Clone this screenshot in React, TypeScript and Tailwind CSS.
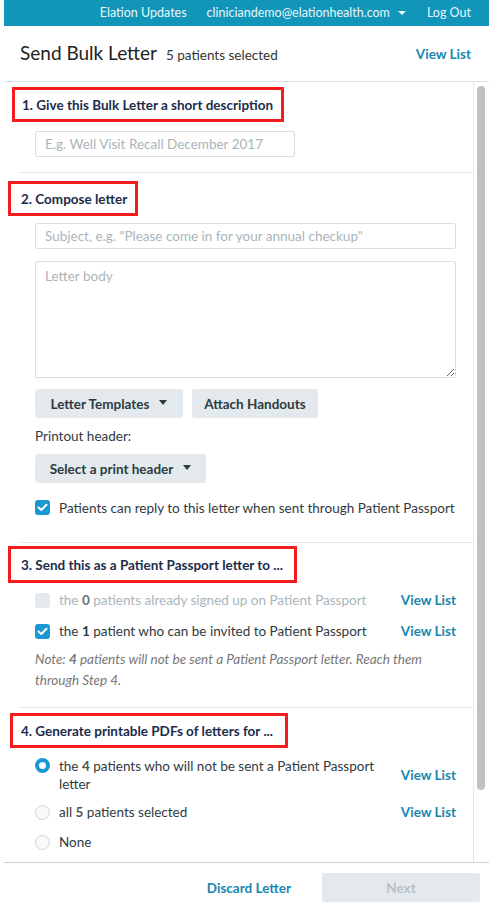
import React from "react";

const Check = () => (
  <svg width="11" height="9" viewBox="0 0 11 9" fill="none">
    <path d="M1.5 4.5 L4.3 7 L9.5 1.8" stroke="white" strokeWidth="2" strokeLinecap="round" strokeLinejoin="round" />
  </svg>
);

const Caret = () => (
  <span className="inline-block w-0 h-0 border-l-[4px] border-r-[4px] border-t-[5px] border-l-transparent border-r-transparent border-t-[#2c3b42] ml-[10px] translate-y-[-1px]" />
);

function Heading({ text, ml, w, h, pl, mt }: { text: string; ml: string; w: string; h: string; pl: string; mt: string }) {
  return (
    <div className={`${ml} ${w} ${h} ${pl} ${mt} border-[3px] border-[#f41c1c] flex items-center text-[13.5px] font-bold text-[#1b2c4b] whitespace-nowrap`}>
      {text}
    </div>
  );
}

export default function App() {
  return (
    <div className="w-[489px] h-[912px] bg-white pl-[4px] flex flex-col font-['Lato','Liberation_Sans',sans-serif] text-[13.5px] leading-[16px] text-[#2f3a3f] overflow-hidden">
      {/* top bar */}
      <div className="h-[26px] bg-[#1196b9] flex items-center justify-end pr-[18px] text-[12.5px] text-[#e8f5f9] shrink-0">
        <span>Elation Updates</span>
        <span className="ml-[20px] flex items-center">
          cliniciandemo@elationhealth.com
          <span className="inline-block w-0 h-0 border-l-[4px] border-r-[4px] border-t-[4px] border-l-transparent border-r-transparent border-t-[#e8f5f9] ml-[8px]" />
        </span>
        <span className="ml-[21px]">Log Out</span>
      </div>
      {/* header */}
      <div className="h-[56px] flex items-center justify-between pl-[16px] pr-[18px] border-b border-[#dce3e7] shrink-0">
        <div className="flex items-baseline">
          <span className="text-[19px] text-[#222]">Send Bulk Letter</span>
          <span className="ml-[9px] text-[13.5px] text-[#333]">5 patients selected</span>
        </div>
        <span className="text-[13.5px] font-bold text-[#1986b0]">View List</span>
      </div>
      {/* body */}
      <div className="flex-1 flex min-h-0">
        <div className="w-[470px] border-r border-[#e6e8ea] flex flex-col shrink-0">
          {/* Section 1 */}
          <Heading text="1. Give this Bulk Letter a short description" ml="ml-[8px]" w="w-[272px]" h="h-[35px]" pl="pl-[7px]" mt="mt-[5px]" />
          <input
            placeholder="E.g. Well Visit Recall December 2017"
            className="ml-[31px] mt-[9px] w-[260px] h-[26px] border border-[#d8dfe3] rounded-[2px] px-[9px] text-[13.5px] placeholder:text-[#aab5bb] outline-none"
          />
          <div className="ml-[16px] mt-[15px] border-t border-[#e3e7ea]" />
          {/* Section 2 */}
          <Heading text="2. Compose letter" ml="ml-[4px]" w="w-[130px]" h="h-[35px]" pl="pl-[10px]" mt="mt-[8px]" />
          <input
            placeholder={'Subject, e.g. "Please come in for your annual checkup"'}
            className="ml-[31px] mt-[7px] w-[421px] h-[26px] border border-[#d8dfe3] rounded-[2px] px-[9px] text-[13.5px] placeholder:text-[#aab5bb] outline-none"
          />
          <textarea
            placeholder="Letter body"
            className="ml-[31px] mt-[12px] w-[421px] h-[117px] border border-[#d8dfe3] rounded-[2px] px-[9px] py-[6px] text-[13.5px] placeholder:text-[#aab5bb] outline-none resize-y"
          />
          <div className="ml-[31px] mt-[11px] flex gap-[9px]">
            <div className="w-[148px] h-[29px] rounded-[3px] bg-[#e3e9ec] flex items-center justify-center font-bold text-[#2c3b42]">
              Letter Templates
              <Caret />
            </div>
            <div className="w-[126px] h-[29px] rounded-[3px] bg-[#e3e9ec] flex items-center justify-center font-bold text-[#2c3b42]">
              Attach Handouts
            </div>
          </div>
          <div className="ml-[31px] mt-[11px] h-[15px] leading-[15px] text-[#2f3a3f]">Printout header:</div>
          <div className="ml-[31px] mt-[10px] w-[171px] h-[29px] rounded-[3px] bg-[#e3e9ec] flex items-center justify-center font-bold text-[#2c3b42]">
            Select a print header
            <Caret />
          </div>
          <div className="ml-[31px] mt-[17px] flex items-center h-[15px]">
            <span className="w-[15px] h-[15px] rounded-[3px] bg-[#1a98d3] flex items-center justify-center shrink-0">
              <Check />
            </span>
            <span className="ml-[9px] text-[#2f3a3f] whitespace-nowrap">Patients can reply to this letter when sent through Patient Passport</span>
          </div>
          <div className="ml-[16px] mt-[27px] border-t border-[#e3e7ea]" />
          {/* Section 3 */}
          <Heading text="3. Send this as a Patient Passport letter to ..." ml="ml-[4px]" w="w-[289px]" h="h-[37px]" pl="pl-[10px]" mt="mt-[3px]" />
          <div className="ml-[31px] mt-[9px] w-[421px] flex items-center justify-between h-[16px]">
            <div className="flex items-center">
              <span className="w-[15px] h-[15px] rounded-[3px] bg-[#e5eaed] shrink-0" />
              <span className="ml-[9px] text-[#aab5bb]">
                the <b className="text-[#6a757b]">0</b> patients already signed up on Patient Passport
              </span>
            </div>
            <span className="font-bold text-[#1986b0]">View List</span>
          </div>
          <div className="ml-[31px] mt-[15px] w-[421px] flex items-center justify-between h-[16px]">
            <div className="flex items-center">
              <span className="w-[15px] h-[15px] rounded-[3px] bg-[#1a98d3] flex items-center justify-center shrink-0">
                <Check />
              </span>
              <span className="ml-[9px] text-[#2f3a3f]">
                the <b>1</b> patient who can be invited to Patient Passport
              </span>
            </div>
            <span className="font-bold text-[#1986b0]">View List</span>
          </div>
          <p className="ml-[31px] mt-[10px] w-[421px] italic text-[13.5px] leading-[21px] text-[#777]">
            Note: <b>4</b> patients will not be sent a Patient Passport letter. Reach them through Step 4.
          </p>
          <div className="ml-[16px] mt-[16px] border-t border-[#e3e7ea]" />
          {/* Section 4 */}
          <Heading text="4. Generate printable PDFs of letters for ..." ml="ml-[6px]" w="w-[278px]" h="h-[35px]" pl="pl-[8px]" mt="mt-[5px]" />
          <div className="ml-[31px] mt-[9px] w-[421px] flex items-center justify-between">
            <div className="flex items-start">
              <span className="w-[15px] h-[15px] rounded-full border-[4px] border-[#1a98d3] bg-white shrink-0 mt-[1px]" />
              <p className="ml-[9px] w-[320px] leading-[18px] text-[#2f3a3f]">
                the <b className="text-[#555]">4</b> patients who will not be sent a Patient Passport letter
              </p>
            </div>
            <span className="font-bold text-[#1986b0]">View List</span>
          </div>
          <div className="ml-[31px] mt-[11px] w-[421px] flex items-center justify-between h-[16px]">
            <div className="flex items-center">
              <span className="w-[15px] h-[15px] rounded-full border border-[#cfd6da] bg-[#f9fafb] shrink-0" />
              <span className="ml-[9px] text-[#2f3a3f]">
                all <b className="text-[#555]">5</b> patients selected
              </span>
            </div>
            <span className="font-bold text-[#1986b0]">View List</span>
          </div>
          <div className="ml-[31px] mt-[14px] flex items-center h-[16px]">
            <span className="w-[15px] h-[15px] rounded-full border border-[#cfd6da] bg-[#f9fafb] shrink-0" />
            <span className="ml-[9px] text-[#2f3a3f]">None</span>
          </div>
        </div>
        {/* scrollbar */}
        <div className="flex-1 pl-[3px] pt-[4px]">
          <div className="w-[8px] h-[704px] rounded-full bg-[#c1c1c1]" />
        </div>
      </div>
      {/* footer */}
      <div className="h-[50px] border-t border-[#c6d5dc] flex items-center justify-end pr-[9px] shrink-0">
        <span className="font-bold text-[#1986b0] mr-[31px]">Discard Letter</span>
        <div className="w-[158px] h-[29px] rounded-[3px] bg-[#e3e9ec] flex items-center justify-center font-bold text-[#b5c1c7]">
          Next
        </div>
      </div>
    </div>
  );
}
